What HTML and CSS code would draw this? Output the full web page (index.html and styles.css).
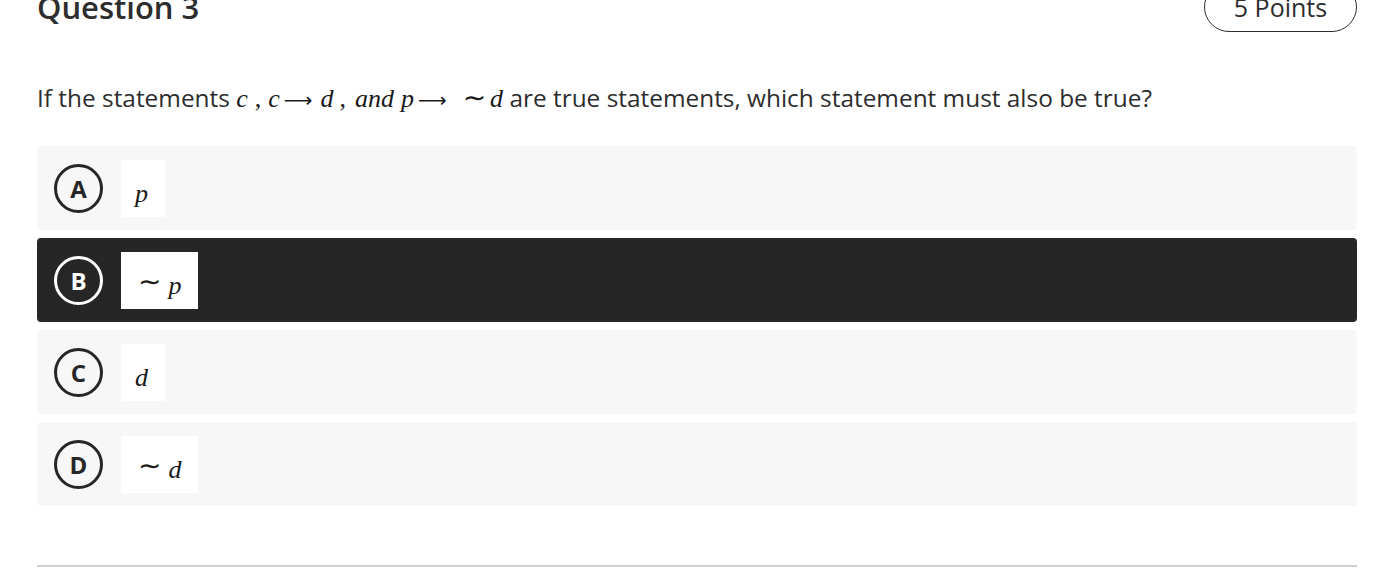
FILE: index.html
```html
<!DOCTYPE html>
<html lang="en">
<head>
<meta charset="utf-8">
<title>Question 3</title>
<link rel="stylesheet" href="styles.css">
</head>
<body>
<main class="page">
  <header class="head">
    <h2 class="title">Question 3</h2>
    <span class="points">5 Points</span>
  </header>
  <p class="prompt">If the statements <span class="math"><i class="m">c</i><span class="m cm1">,</span><i class="m c2">c</i><span class="m arr a1">⟶</span><i class="m d1">d</i><span class="m cm2">,</span><i class="m and">and</i><i class="m p1">p</i><span class="m arr a2">⟶</span><span class="m tl">∼</span><i class="m d2">d</i></span> are true statements, which statement must also be true?</p>
  <div class="options">
    <div class="option">
      <span class="badge">A</span>
      <span class="ans"><i>p</i></span>
    </div>
    <div class="option selected">
      <span class="badge">B</span>
      <span class="ans"><span class="tilde">∼</span><i>p</i></span>
    </div>
    <div class="option">
      <span class="badge">C</span>
      <span class="ans"><i>d</i></span>
    </div>
    <div class="option">
      <span class="badge">D</span>
      <span class="ans"><span class="tilde">∼</span><i>d</i></span>
    </div>
  </div>
  <hr class="rule">
</main>
</body>
</html>
```

FILE: styles.css
```css
* { box-sizing: border-box; }
html, body { margin: 0; padding: 0; background: #ffffff; }
body {
  font-family: "Open Sans", "Liberation Sans", sans-serif;
  color: #2d2d2d;
  overflow: hidden;
}
.page {
  padding: 0 29px 0 37px;
  margin-top: -18px;
}
.head {
  display: flex;
  justify-content: space-between;
  align-items: flex-start;
  height: 50px;
}
.title {
  margin: 0;
  font-size: 31px;
  font-weight: 600;
  line-height: 50px;
  color: #2d2d2d;
}
.points {
  display: inline-flex;
  align-items: center;
  justify-content: center;
  width: 153px;
  height: 50px;
  border: 1px solid #2d2d2d;
  border-radius: 25px;
  font-size: 25px;
  line-height: 1;
}
.prompt {
  margin: 50px 0 0;
  font-size: 24.4px;
  line-height: 32px;
  height: 32px;
  white-space: nowrap;
}
.math {
  font-family: "Liberation Serif", "Times New Roman", serif;
  font-size: 26px;
  color: #1a1a1a;
}
.m {
  display: inline-block;
  line-height: 20px;
  font-style: italic;
}
.cm1, .cm2, .arr, .tl { font-style: normal; }
.cm1 { margin-left: 7px; }
.c2 { margin-left: 7px; }
.arr {
  font-family: "DejaVu Sans", sans-serif;
  font-size: 20px;
  white-space: nowrap;
}
.a1 { margin-left: 4px; }
.d1 { margin-left: 8px; }
.cm2 { margin-left: 6px; }
.and { margin-left: 9px; }
.p1 { margin-left: 7px; }
.a2 { margin-left: 4px; }
.tl {
  font-family: "DejaVu Sans", sans-serif;
  font-size: 28px;
  margin-left: 16px;
}
.d2 { margin-left: 4px; }
.options {
  margin-top: 32px;
  display: flex;
  flex-direction: column;
  gap: 8px;
}
.option {
  display: flex;
  align-items: center;
  height: 84px;
  padding-left: 17px;
  background: #f7f7f7;
  border-radius: 4px;
}
.option.selected { background: #262626; }
.badge {
  flex: none;
  width: 49px;
  height: 49px;
  border: 3px solid #262626;
  border-radius: 50%;
  display: flex;
  align-items: center;
  justify-content: center;
  font-weight: 700;
  font-size: 24px;
  color: #262626;
}
.selected .badge { border-color: #ffffff; color: #ffffff; }
.ans {
  margin-left: 18px;
  height: 57px;
  background: #ffffff;
  padding: 0 17px 10px 14px;
  display: flex;
  align-items: flex-end;
  font-family: "Liberation Serif", "Times New Roman", serif;
  font-size: 26px;
  color: #1a1a1a;
  line-height: 1;
}
.tilde {
  font-family: "DejaVu Sans", sans-serif;
  font-size: 28px;
  margin: 0 7px 0 3px;
  position: relative;
  top: -3px;
}
.rule {
  margin: 59px 0 0;
  border: 0;
  border-top: 2px solid #d0d0d0;
}
```
